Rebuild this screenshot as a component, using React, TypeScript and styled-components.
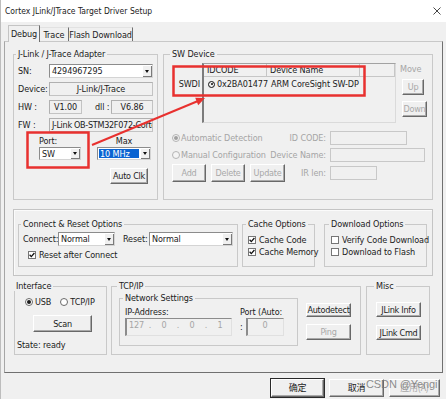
import React from 'react';
import styled, { createGlobalStyle } from 'styled-components';

const UI_FONT = `"Liberation Sans Narrow", "DejaVu Sans Condensed", "Noto Sans", "Noto Sans CJK SC", sans-serif`;

const GlobalStyle = createGlobalStyle`
  html, body {
    margin: 0;
    padding: 0;
    background: #f0f0f0;
  }
`;

// Window frame
const Window = styled.div`
  position: relative;
  box-sizing: border-box;
  width: 446px;
  height: 399px;
  overflow: hidden;
  background: #f0f0f0;
  border-left: 1px solid #bdbdbd;
  font-family: ${UI_FONT};
  font-size: 9px;
  line-height: 10px;
  letter-spacing: -0.1px;
  color: #1b1b1b;
  display: flex;
  flex-direction: column;
`;

const TitleBar = styled.div`
  flex: none;
  height: 22px;
  background: #fff;
  display: flex;
  align-items: center;
  justify-content: space-between;
  padding: 0 5px 0 4px;
  font-size: 8.5px;
  letter-spacing: 0;
`;

const CloseIcon = () => (
  <svg width="8" height="8" viewBox="0 0 8 8">
    <path d="M0.5 0.5 L7.5 7.5 M7.5 0.5 L0.5 7.5" stroke="#333" strokeWidth="0.9" />
  </svg>
);

// Tabs
const TabBar = styled.div`
  flex: none;
  height: 19px;
  display: flex;
  align-items: flex-end;
  padding-left: 7px;
  position: relative;
  z-index: 1;
`;

const Tab = styled.div<{ $w: number; $active?: boolean }>`
  box-sizing: border-box;
  width: ${p => p.$w}px;
  height: ${p => (p.$active ? 17 : 14)}px;
  margin-bottom: ${p => (p.$active ? -1 : 0)}px;
  display: flex;
  align-items: center;
  justify-content: center;
  white-space: nowrap;
  background: #f0f0f0;
  border-top: 1px solid ${p => (p.$active ? '#c4c4c4' : '#e2e2e2')};
  border-left: ${p => (p.$active ? '1px solid #c4c4c4' : 'none')};
  border-right: 1px solid #6f6f6f;
`;

const TabPanel = styled.div`
  flex: none;
  box-sizing: border-box;
  margin-left: 3px;
  width: 439px;
  height: 332px;
  border: 1px solid #c8c8c8;
  border-left-color: #a6a6a6;
  border-right-color: #707070;
  border-bottom-color: #707070;
  padding: 7px 0 0 8px;
  display: flex;
  flex-direction: column;
`;

// Group boxes
const GroupBox = styled.fieldset<{ $w: number; $h: number; $pad: string }>`
  position: relative;
  box-sizing: border-box;
  flex: none;
  margin: 0;
  min-inline-size: 0;
  width: ${p => p.$w}px;
  height: ${p => p.$h}px;
  padding: ${p => p.$pad};
  border: 1px solid #c9c9c9;
  display: flex;
  flex-direction: column;
  align-items: flex-start;
`;

const Legend = styled.legend`
  padding: 0 2px;
  margin-left: -2px;
  line-height: 10px;
  font-size: 9px;
  white-space: nowrap;
`;

const TopRow = styled.div`
  display: flex;
  gap: 5px;
`;

// Fields
const FormRow = styled.div<{ $mt?: number; $h?: number }>`
  display: flex;
  align-items: center;
  height: ${p => p.$h ?? 14}px;
  margin-top: ${p => p.$mt ?? 0}px;
  white-space: nowrap;
`;

const FieldLabel = styled.span<{ $w?: number; $ml?: number; $muted?: boolean; $right?: boolean }>`
  flex: none;
  width: ${p => (p.$w ? `${p.$w}px` : 'auto')};
  margin-left: ${p => p.$ml ?? 0}px;
  text-align: ${p => (p.$right ? 'right' : 'left')};
  color: ${p => (p.$muted ? '#a5a5a5' : 'inherit')};
  white-space: nowrap;
`;

const ReadField = styled.div<{ $w: number; $h?: number; $align?: string }>`
  flex: none;
  box-sizing: border-box;
  width: ${p => p.$w}px;
  height: ${p => p.$h ?? 14}px;
  padding: 0 2px;
  background: #f0f0f0;
  border: 1px solid #c3c3c3;
  border-top-color: #b0b0b0;
  border-left-color: #b0b0b0;
  display: flex;
  align-items: center;
  justify-content: ${p => p.$align ?? 'flex-start'};
  overflow: hidden;
  white-space: nowrap;
`;

const FirmwareField = styled(ReadField)`
  letter-spacing: -0.3px;
`;

const ComboBox = styled.div<{ $w: number; $h: number }>`
  flex: none;
  box-sizing: border-box;
  width: ${p => p.$w}px;
  height: ${p => p.$h}px;
  background: #fff;
  border: 1px solid #8c8c8c;
  border-right-color: #d4d4d4;
  border-bottom-color: #d4d4d4;
  display: flex;
  align-items: stretch;
`;

const ComboValue = styled.span<{ $selected?: boolean }>`
  flex: 1;
  margin: 1px;
  padding-left: 1px;
  display: flex;
  align-items: center;
  background: ${p => (p.$selected ? '#0a64d2' : 'transparent')};
  color: ${p => (p.$selected ? '#fff' : 'inherit')};
  overflow: hidden;
`;

const ComboArrow = styled.span`
  flex: none;
  width: 10px;
  background: #f0f0f0;
  box-shadow: inset 1px 1px 0 #fff, inset -1px -1px 0 #7a7a7a;
  display: flex;
  align-items: center;
  justify-content: center;

  &::after {
    content: '';
    border-left: 2.5px solid transparent;
    border-right: 2.5px solid transparent;
    border-top: 3px solid #111;
  }
`;

const Combo = ({ w, h = 14, value, selected }: { w: number; h?: number; value: string; selected?: boolean }) => (
  <ComboBox $w={w} $h={h}>
    <ComboValue $selected={selected}>{value}</ComboValue>
    <ComboArrow />
  </ComboBox>
);

const Button = styled.div<{ $w: number; $h: number; $muted?: boolean; $default?: boolean }>`
  flex: none;
  box-sizing: border-box;
  width: ${p => p.$w}px;
  height: ${p => p.$h}px;
  display: flex;
  align-items: center;
  justify-content: center;
  background: #f0f0f0;
  color: ${p => (p.$muted ? '#a8a8a8' : '#1b1b1b')};
  letter-spacing: -0.25px;
  border: 1px solid;
  border-color: #fff #686868 #686868 #fff;
  box-shadow: inset -1px -1px 0 #a9a9a9${p => (p.$default ? ', 0 0 0 1px #2a2a2a' : '')};
  white-space: nowrap;
  overflow: hidden;
`;

const Radio = styled.span<{ $checked?: boolean; $muted?: boolean }>`
  flex: none;
  box-sizing: border-box;
  width: 8px;
  height: 8px;
  border-radius: 50%;
  border: 1px solid ${p => (p.$muted ? '#b4b4b4' : '#6a6a6a')};
  background: ${p => (p.$muted ? '#f4f4f4' : '#fff')};
  display: inline-flex;
  align-items: center;
  justify-content: center;

  &::after {
    content: '';
    width: 4px;
    height: 4px;
    border-radius: 50%;
    background: ${p => (p.$checked ? (p.$muted ? '#a0a0a0' : '#1b1b1b') : 'transparent')};
  }
`;

const CheckBox = styled.span`
  flex: none;
  box-sizing: border-box;
  width: 8px;
  height: 8px;
  border: 1px solid #767676;
  background: #fff;
  display: inline-flex;
  align-items: center;
  justify-content: center;
`;

const Check = ({ checked }: { checked?: boolean }) => (
  <CheckBox>
    {checked && (
      <svg width="6" height="6" viewBox="0 0 6 6">
        <path d="M0.6 2.8 L2.3 4.6 L5.4 1" fill="none" stroke="#111" strokeWidth="1.3" />
      </svg>
    )}
  </CheckBox>
);

const OptionLine = styled.div<{ $h?: number; $ml?: number; $mt?: number; $gap?: number; $muted?: boolean }>`
  display: flex;
  align-items: center;
  height: ${p => p.$h ?? 12}px;
  margin-left: ${p => p.$ml ?? 0}px;
  margin-top: ${p => p.$mt ?? 0}px;
  gap: ${p => p.$gap ?? 3}px;
  color: ${p => (p.$muted ? '#a5a5a5' : 'inherit')};
  white-space: nowrap;
`;

// J-Link adapter speed block
const SpeedRow = styled.div`
  display: flex;
  margin-top: 4px;
`;

const SpeedColumn = styled.div<{ $ml: number; $w: number; $center?: boolean }>`
  display: flex;
  flex-direction: column;
  gap: 1px;
  margin-left: ${p => p.$ml}px;
  width: ${p => p.$w}px;
  text-align: ${p => (p.$center ? 'center' : 'left')};
  line-height: 10px;
`;

const AutoClk = styled(Button)`
  align-self: flex-end;
  margin: 8px 5px 0 0;
`;

// SW device block
const DeviceRow = styled.div`
  display: flex;
  align-items: flex-start;
`;

const ChainLabel = styled.div`
  flex: none;
  box-sizing: border-box;
  width: 30px;
  height: 60px;
  padding: 16px 2px 0 0;
  text-align: right;
  white-space: nowrap;
`;

const DeviceList = styled.div`
  flex: none;
  box-sizing: border-box;
  width: 194px;
  height: 60px;
  border: 1px solid #dadada;
  border-top-color: #a2a2a2;
  border-left: 2px solid #7c7c7c;
`;

const ListGrid = styled.div<{ $header?: boolean }>`
  display: grid;
  grid-template-columns: 63px 93px 1fr;
  height: ${p => (p.$header ? 13 : 14)}px;
  align-items: center;
  white-space: nowrap;
`;

const ListCell = styled.span<{ $header?: boolean }>`
  height: 100%;
  display: flex;
  align-items: center;
  gap: 2px;
  padding-left: ${p => (p.$header ? 3 : 4)}px;
  box-sizing: border-box;
  border-right: ${p => (p.$header ? '1px solid #c6c6c6' : 'none')};
  border-bottom: ${p => (p.$header ? '1px solid #c6c6c6' : 'none')};
`;

const RowDot = styled.span`
  flex: none;
  box-sizing: border-box;
  width: 7px;
  height: 7px;
  border-radius: 50%;
  border: 1.5px solid #111;
  display: inline-flex;
  align-items: center;
  justify-content: center;

  &::after {
    content: '';
    width: 2px;
    height: 2px;
    border-radius: 50%;
    background: #111;
  }
`;

const MoveColumn = styled.div`
  flex: none;
  margin-left: 4px;
  display: flex;
  flex-direction: column;
  align-items: flex-start;
  color: #a5a5a5;
`;

const MoveLabel = styled.span`
  height: 12px;
  display: flex;
  align-items: center;
`;

const MoveButton = styled(Button)<{ $mt: number }>`
  margin: ${p => p.$mt}px 0 0 2px;
`;

const ConfigRow = styled.div<{ $mt: number; $h: number }>`
  display: flex;
  align-items: flex-start;
  margin-top: ${p => p.$mt}px;
  height: ${p => p.$h}px;
`;

const ConfigLead = styled.div`
  flex: none;
  width: 154px;
  height: 14px;
  display: flex;
  align-items: center;
  justify-content: space-between;
  color: #a5a5a5;
  white-space: nowrap;
`;

const ConfigField = styled(ReadField)`
  margin-left: 4px;
  border-color: #c8c8c8;
`;

const ButtonStrip = styled.div<{ $gap: number }>`
  display: flex;
  gap: ${p => p.$gap}px;
`;

// Middle frame
const OptionsFrame = styled.div`
  box-sizing: border-box;
  width: 420px;
  height: 67px;
  margin-top: 9px;
  border: 1px solid #c4c4c4;
  box-shadow: inset 1px 1px 0 #fbfbfb;
  padding: 9px 0 0 4px;
  display: flex;
  align-items: flex-start;
  gap: 4px;
`;

// Bottom row
const BottomRow = styled.div`
  display: flex;
  margin: 5px 0 0 1px;
  gap: 4px;
`;

const ScanButton = styled(Button)`
  margin: 7px 0 0 17px;
`;

const StateText = styled.div`
  margin: 8px 0 0 1px;
  height: 10px;
`;

const NetRow = styled.div`
  display: flex;
  align-items: flex-start;
`;

const NetGrid = styled.div`
  display: grid;
  grid-template-columns: 107px auto;
  column-gap: 8px;
  row-gap: 1px;
  grid-template-rows: 10px 18px;
  white-space: nowrap;
`;

const IpField = styled.div`
  box-sizing: border-box;
  height: 18px;
  background: #f0f0f0;
  border: 1px solid #e0e0e0;
  border-top-color: #8c8c8c;
  border-left: 2px solid #8c8c8c;
  padding: 1px 0 0 2px;
  display: flex;
  color: #a5a5a5;
`;

const Octet = styled.span`
  width: 14px;
  text-align: center;
`;

const PortCell = styled.div`
  display: flex;
  align-items: flex-start;
  gap: 3px;
`;

const PortColon = styled.span`
  margin-top: 4px;
`;

const PortField = styled.div`
  box-sizing: border-box;
  width: 38px;
  height: 18px;
  background: #f0f0f0;
  border: 1px solid #e0e0e0;
  border-top-color: #8c8c8c;
  border-left: 2px solid #8c8c8c;
  padding-top: 1px;
  text-align: center;
  color: #a5a5a5;
`;

const SideButtons = styled.div<{ $ml: number; $mt: number; $gap: number }>`
  display: flex;
  flex-direction: column;
  margin: ${p => p.$mt}px 0 0 ${p => p.$ml}px;
  gap: ${p => p.$gap}px;
`;

// Footer
const Footer = styled.div`
  flex: none;
  display: flex;
  justify-content: flex-end;
  padding: 6px 6px 0 0;
  gap: 5px;
  font-family: "Noto Sans CJK SC", ${UI_FONT};
  font-size: 9px;
`;

const Watermark = styled.div`
  position: absolute;
  left: 365px;
  top: 378px;
  font-family: "Liberation Sans", Arial, sans-serif;
  font-size: 11px;
  line-height: 13px;
  color: rgba(120, 120, 120, 0.85);
  pointer-events: none;
`;

const Annotations = styled.svg`
  position: absolute;
  left: 0;
  top: 0;
  pointer-events: none;
`;

export default function App() {
  return (
    <>
      <GlobalStyle />
      <Window>
        <TitleBar>
          <span>Cortex JLink/JTrace Target Driver Setup</span>
          <CloseIcon />
        </TitleBar>

        <TabBar>
          <Tab $w={32} $active>Debug</Tab>
          <Tab $w={29}>Trace</Tab>
          <Tab $w={64}>Flash Download</Tab>
        </TabBar>

        <TabPanel>
          <TopRow>
            <GroupBox $w={145} $h={151} $pad="5px 4px 0 4px">
              <Legend>J-Link / J-Trace Adapter</Legend>
              <FormRow>
                <FieldLabel $w={31}>SN:</FieldLabel>
                <Combo w={104} value="4294967295" />
              </FormRow>
              <FormRow $mt={4}>
                <FieldLabel $w={31}>Device:</FieldLabel>
                <ReadField $w={104} $align="center">J-Link/J-Trace</ReadField>
              </FormRow>
              <FormRow $mt={4}>
                <FieldLabel $w={31}>HW :</FieldLabel>
                <ReadField $w={33} $align="center">V1.00</ReadField>
                <FieldLabel $w={16} $ml={13}>dll :</FieldLabel>
                <ReadField $w={42} $align="center">V6.86</ReadField>
              </FormRow>
              <FormRow $mt={4}>
                <FieldLabel $w={31}>FW :</FieldLabel>
                <FirmwareField $w={104}>J-Link OB-STM32F072-Corte</FirmwareField>
              </FormRow>
              <SpeedRow>
                <SpeedColumn $ml={21} $w={42}>
                  <span>Port:</span>
                  <Combo w={42} h={13} value="SW" />
                </SpeedColumn>
                <SpeedColumn $ml={16} $w={54} $center>
                  <span>Max</span>
                  <Combo w={54} h={13} value="10 MHz" selected />
                </SpeedColumn>
              </SpeedRow>
              <AutoClk $w={38} $h={16}>Auto Clk</AutoClk>
            </GroupBox>

            <GroupBox $w={270} $h={151} $pad="4px 0 0 8px">
              <Legend>SW Device</Legend>
              <DeviceRow>
                <ChainLabel>SWDI</ChainLabel>
                <DeviceList>
                  <ListGrid $header>
                    <ListCell $header>IDCODE</ListCell>
                    <ListCell $header>Device Name</ListCell>
                    <ListCell $header />
                  </ListGrid>
                  <ListGrid>
                    <ListCell>
                      <RowDot />
                      0x2BA01477
                    </ListCell>
                    <ListCell>ARM CoreSight SW-DP</ListCell>
                    <ListCell />
                  </ListGrid>
                </DeviceList>
                <MoveColumn>
                  <MoveLabel>Move</MoveLabel>
                  <MoveButton $w={22} $h={16} $mt={4} $muted>Up</MoveButton>
                  <MoveButton $w={25} $h={16} $mt={6} $muted>Down</MoveButton>
                </MoveColumn>
              </DeviceRow>
              <ConfigRow $mt={8} $h={14}>
                <ConfigLead>
                  <OptionLine $h={14} $gap={1} $muted>
                    <Radio $checked $muted />
                    Automatic Detection
                  </OptionLine>
                  <span>ID CODE:</span>
                </ConfigLead>
                <ConfigField $w={77} />
              </ConfigRow>
              <ConfigRow $mt={3} $h={14}>
                <ConfigLead>
                  <OptionLine $h={14} $gap={1} $muted>
                    <Radio $muted />
                    Manual Configuration
                  </OptionLine>
                  <span>Device Name:</span>
                </ConfigLead>
                <ConfigField $w={95} />
              </ConfigRow>
              <ConfigRow $mt={4} $h={18}>
                <ConfigLead>
                  <ButtonStrip $gap={5}>
                    <Button $w={34} $h={18} $muted>Add</Button>
                    <Button $w={34} $h={18} $muted>Delete</Button>
                    <Button $w={35} $h={18} $muted>Update</Button>
                  </ButtonStrip>
                  <span>IR len:</span>
                </ConfigLead>
                <ConfigField $w={47} />
              </ConfigRow>
            </GroupBox>
          </TopRow>

          <OptionsFrame>
            <GroupBox $w={220} $h={48} $pad="3px 4px 0 4px">
              <Legend>Connect &amp; Reset Options</Legend>
              <FormRow>
                <FieldLabel $w={35}>Connect:</FieldLabel>
                <Combo w={57} value="Normal" />
                <FieldLabel $w={26} $ml={8}>Reset:</FieldLabel>
                <Combo w={84} value="Normal" />
              </FormRow>
              <OptionLine $h={10} $ml={5} $mt={4} $gap={3}>
                <Check checked />
                Reset after Connect
              </OptionLine>
            </GroupBox>
            <GroupBox $w={73} $h={48} $pad="5px 2px 0 5px">
              <Legend>Cache Options</Legend>
              <OptionLine>
                <Check checked />
                Cache Code
              </OptionLine>
              <OptionLine>
                <Check checked />
                Cache Memory
              </OptionLine>
            </GroupBox>
            <GroupBox $w={103} $h={48} $pad="5px 0 0 6px" style={{ marginLeft: 5 }}>
              <Legend>Download Options</Legend>
              <OptionLine>
                <Check />
                Verify Code Download
              </OptionLine>
              <OptionLine>
                <Check />
                Download to Flash
              </OptionLine>
            </GroupBox>
          </OptionsFrame>

          <BottomRow>
            <GroupBox $w={93} $h={74} $pad="5px 2px 0 1px">
              <Legend>Interface</Legend>
              <OptionLine $gap={0}>
                <OptionLine $ml={9} $gap={2}>
                  <Radio $checked />
                  USB
                </OptionLine>
                <OptionLine $ml={9} $gap={2}>
                  <Radio />
                  TCP/IP
                </OptionLine>
              </OptionLine>
              <ScanButton $w={59} $h={17}>Scan</ScanButton>
              <StateText>State: ready</StateText>
            </GroupBox>

            <GroupBox $w={250} $h={74} $pad="2px 0 0 7px">
              <Legend>TCP/IP</Legend>
              <NetRow>
                <GroupBox $w={179} $h={53} $pad="4px 0 0 5px">
                  <Legend>Network Settings</Legend>
                  <NetGrid>
                    <span>IP-Address:</span>
                    <span>Port (Auto:</span>
                    <IpField>
                      <Octet>127</Octet>
                      <Octet>.</Octet>
                      <Octet>0</Octet>
                      <Octet>.</Octet>
                      <Octet>0</Octet>
                      <Octet>.</Octet>
                      <Octet>1</Octet>
                    </IpField>
                    <PortCell>
                      <PortColon>:</PortColon>
                      <PortField>0</PortField>
                    </PortCell>
                  </NetGrid>
                </GroupBox>
                <SideButtons $ml={8} $mt={10} $gap={7}>
                  <Button $w={45} $h={14}>Autodetect</Button>
                  <Button $w={45} $h={16} $muted>Ping</Button>
                </SideButtons>
              </NetRow>
            </GroupBox>

            <GroupBox $w={64} $h={74} $pad="0 0 0 9px" style={{ marginLeft: 1 }}>
              <Legend>Misc</Legend>
              <SideButtons $ml={0} $mt={11} $gap={8}>
                <Button $w={45} $h={15}>JLink Info</Button>
                <Button $w={45} $h={15}>JLink Cmd</Button>
              </SideButtons>
            </GroupBox>
          </BottomRow>
        </TabPanel>

        <Footer>
          <Button $w={53} $h={18} $default>确定</Button>
          <Button $w={55} $h={18}>取消</Button>
          <Button $w={51} $h={18} $muted>应用(A)</Button>
        </Footer>

        <Watermark>CSDN @Yengi</Watermark>

        <Annotations width="446" height="399" viewBox="0 0 446 399">
          <rect x="26.5" y="132.5" width="61" height="35" fill="none" stroke="#e8312f" strokeWidth="2.5" />
          <rect x="172.5" y="66.5" width="191" height="29" fill="none" stroke="#e8312f" strokeWidth="2.5" />
          <line x1="91" y1="145" x2="197" y2="101" stroke="#e8312f" strokeWidth="2" />
          <polygon points="204,98 197.2,105.2 194.2,97.8" fill="#e8312f" />
        </Annotations>
      </Window>
    </>
  );
}
